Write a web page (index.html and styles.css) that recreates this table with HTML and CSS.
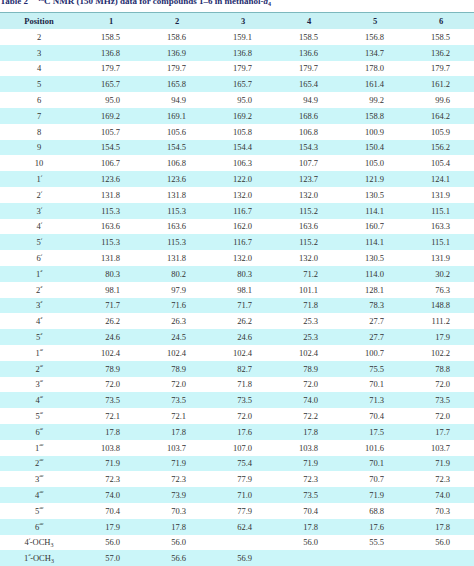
FILE: index.html
```html
<!DOCTYPE html>
<html>
<head>
<meta charset="utf-8">
<link rel="stylesheet" href="styles.css">
</head>
<body>
<div class="title"><span class="tnum">Table 2</span><span class="tcap"><sup>13</sup>C NMR (150 MHz) data for compounds <b>1</b>–<b>6</b> in methanol-<i>d</i><sub>4</sub></span></div>
<table class="nmr">
<thead>
<tr><th class="pos">Position</th><th>1</th><th>2</th><th>3</th><th>4</th><th>5</th><th>6</th></tr>
</thead>
<tbody>
<tr><td class="pos">2</td><td>158.5</td><td>158.6</td><td>159.1</td><td>158.5</td><td>156.8</td><td>158.5</td></tr>
<tr><td class="pos">3</td><td>136.8</td><td>136.9</td><td>136.8</td><td>136.6</td><td>134.7</td><td>136.2</td></tr>
<tr><td class="pos">4</td><td>179.7</td><td>179.7</td><td>179.7</td><td>179.7</td><td>178.0</td><td>179.7</td></tr>
<tr><td class="pos">5</td><td>165.7</td><td>165.8</td><td>165.7</td><td>165.4</td><td>161.4</td><td>161.2</td></tr>
<tr><td class="pos">6</td><td>95.0</td><td>94.9</td><td>95.0</td><td>94.9</td><td>99.2</td><td>99.6</td></tr>
<tr><td class="pos">7</td><td>169.2</td><td>169.1</td><td>169.2</td><td>168.6</td><td>158.8</td><td>164.2</td></tr>
<tr><td class="pos">8</td><td>105.7</td><td>105.6</td><td>105.8</td><td>106.8</td><td>100.9</td><td>105.9</td></tr>
<tr><td class="pos">9</td><td>154.5</td><td>154.5</td><td>154.4</td><td>154.3</td><td>150.4</td><td>156.2</td></tr>
<tr><td class="pos">10</td><td>106.7</td><td>106.8</td><td>106.3</td><td>107.7</td><td>105.0</td><td>105.4</td></tr>
<tr><td class="pos">1<span class="pr">′</span></td><td>123.6</td><td>123.6</td><td>122.0</td><td>123.7</td><td>121.9</td><td>124.1</td></tr>
<tr><td class="pos">2<span class="pr">′</span></td><td>131.8</td><td>131.8</td><td>132.0</td><td>132.0</td><td>130.5</td><td>131.9</td></tr>
<tr><td class="pos">3<span class="pr">′</span></td><td>115.3</td><td>115.3</td><td>116.7</td><td>115.2</td><td>114.1</td><td>115.1</td></tr>
<tr><td class="pos">4<span class="pr">′</span></td><td>163.6</td><td>163.6</td><td>162.0</td><td>163.6</td><td>160.7</td><td>163.3</td></tr>
<tr><td class="pos">5<span class="pr">′</span></td><td>115.3</td><td>115.3</td><td>116.7</td><td>115.2</td><td>114.1</td><td>115.1</td></tr>
<tr><td class="pos">6<span class="pr">′</span></td><td>131.8</td><td>131.8</td><td>132.0</td><td>132.0</td><td>130.5</td><td>131.9</td></tr>
<tr><td class="pos">1<span class="pr">′′</span></td><td>80.3</td><td>80.2</td><td>80.3</td><td>71.2</td><td>114.0</td><td>30.2</td></tr>
<tr><td class="pos">2<span class="pr">′′</span></td><td>98.1</td><td>97.9</td><td>98.1</td><td>101.1</td><td>128.1</td><td>76.3</td></tr>
<tr><td class="pos">3<span class="pr">′′</span></td><td>71.7</td><td>71.6</td><td>71.7</td><td>71.8</td><td>78.3</td><td>148.8</td></tr>
<tr><td class="pos">4<span class="pr">′′</span></td><td>26.2</td><td>26.3</td><td>26.2</td><td>25.3</td><td>27.7</td><td>111.2</td></tr>
<tr><td class="pos">5<span class="pr">′′</span></td><td>24.6</td><td>24.5</td><td>24.6</td><td>25.3</td><td>27.7</td><td>17.9</td></tr>
<tr><td class="pos">1<span class="pr">′′′</span></td><td>102.4</td><td>102.4</td><td>102.4</td><td>102.4</td><td>100.7</td><td>102.2</td></tr>
<tr><td class="pos">2<span class="pr">′′′</span></td><td>78.9</td><td>78.9</td><td>82.7</td><td>78.9</td><td>75.5</td><td>78.8</td></tr>
<tr><td class="pos">3<span class="pr">′′′</span></td><td>72.0</td><td>72.0</td><td>71.8</td><td>72.0</td><td>70.1</td><td>72.0</td></tr>
<tr><td class="pos">4<span class="pr">′′′</span></td><td>73.5</td><td>73.5</td><td>73.5</td><td>74.0</td><td>71.3</td><td>73.5</td></tr>
<tr><td class="pos">5<span class="pr">′′′</span></td><td>72.1</td><td>72.1</td><td>72.0</td><td>72.2</td><td>70.4</td><td>72.0</td></tr>
<tr><td class="pos">6<span class="pr">′′′</span></td><td>17.8</td><td>17.8</td><td>17.6</td><td>17.8</td><td>17.5</td><td>17.7</td></tr>
<tr><td class="pos">1<span class="pr">′′′′</span></td><td>103.8</td><td>103.7</td><td>107.0</td><td>103.8</td><td>101.6</td><td>103.7</td></tr>
<tr><td class="pos">2<span class="pr">′′′′</span></td><td>71.9</td><td>71.9</td><td>75.4</td><td>71.9</td><td>70.1</td><td>71.9</td></tr>
<tr><td class="pos">3<span class="pr">′′′′</span></td><td>72.3</td><td>72.3</td><td>77.9</td><td>72.3</td><td>70.7</td><td>72.3</td></tr>
<tr><td class="pos">4<span class="pr">′′′′</span></td><td>74.0</td><td>73.9</td><td>71.0</td><td>73.5</td><td>71.9</td><td>74.0</td></tr>
<tr><td class="pos">5<span class="pr">′′′′</span></td><td>70.4</td><td>70.3</td><td>77.9</td><td>70.4</td><td>68.8</td><td>70.3</td></tr>
<tr><td class="pos">6<span class="pr">′′′′</span></td><td>17.9</td><td>17.8</td><td>62.4</td><td>17.8</td><td>17.6</td><td>17.8</td></tr>
<tr><td class="pos">4<span class="pr">′</span>-OCH<sub>3</sub></td><td>56.0</td><td>56.0</td><td></td><td>56.0</td><td>55.5</td><td>56.0</td></tr>
<tr><td class="pos">1<span class="pr">′′</span>-OCH<sub>3</sub></td><td>57.0</td><td>56.6</td><td>56.9</td><td></td><td></td><td></td></tr>
</tbody>
</table>
</body>
</html>
```
FILE: styles.css
```css
html, body {
  margin: 0;
  padding: 0;
  background: #ffffff;
}
body {
  width: 474px;
  height: 566px;
  overflow: hidden;
  font-family: "Liberation Serif", "Times New Roman", serif;
}
.title {
  height: 15px;
  margin-top: -3px;
  font-size: 9px;
  line-height: 9px;
  font-weight: bold;
  color: #1e2c6e;
  white-space: nowrap;
}
.title .tnum {
  display: inline-block;
  width: 38px;
}
.title sup {
  font-size: 6px;
  vertical-align: 3px;
  line-height: 0;
}
.title sub {
  font-size: 6px;
  vertical-align: -2px;
  line-height: 0;
}
.nmr {
  width: 474px;
  border-collapse: collapse;
  table-layout: fixed;
  font-size: 8.5px;
  color: #333333;
}
.nmr th {
  height: 16px;
  padding: 0;
  background: #c8f1f4;
  border-top: 1px solid #7cb8bd;
  color: #1a1f45;
  font-weight: bold;
  text-align: center;
  width: 66px;
}
.nmr th.pos {
  width: 78px;
}
.nmr td {
  height: 15.8px;
  padding: 0 24px 0 0;
  text-align: right;
  line-height: 10px;
}
.nmr td.pos {
  padding: 0;
  text-align: center;
}
.nmr tbody tr:nth-child(even) td {
  background: #cbf6f9;
}
.nmr tbody tr:last-child td {
  border-bottom: 1px solid #94d3d8;
}
.pr {
  font-family: "DejaVu Serif", serif;
  font-size: 7.5px;
  vertical-align: 1px;
  line-height: 0;
  letter-spacing: -0.8px;
  color: #222222;
}
.nmr sub {
  font-size: 6px;
  vertical-align: -2px;
  line-height: 0;
}
```
